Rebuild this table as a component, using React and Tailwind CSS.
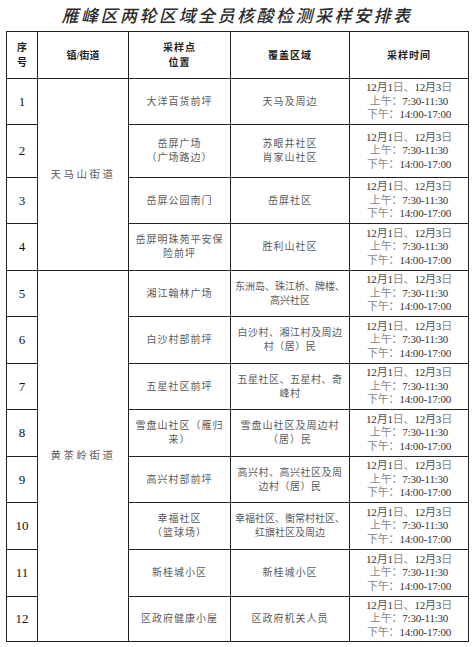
import React from 'react';

const cjk = { fontFamily: '"Liberation Serif", "Noto Sans CJK SC", serif' };

const rows = [
  { no: 1, h: 'h-[46px]', site: ['大洋百货前坪'], area: ['天马及周边'] },
  { no: 2, h: 'h-[53px]', site: ['岳屏广场', '（广场路边）'], area: ['苏眼井社区', '肖家山社区'] },
  { no: 3, h: 'h-[46px]', site: ['岳屏公园南门'], area: ['岳屏社区'] },
  { no: 4, h: 'h-[47px]', site: ['岳屏明珠苑平安保', '险前坪'], area: ['胜利山社区'] },
  { no: 5, h: 'h-[46px]', site: ['湘江翰林广场'], area: ['东洲岛、珠江桥、牌楼、', '高兴社区'] },
  { no: 6, h: 'h-[47px]', site: ['白沙村部前坪'], area: ['白沙村、湘江村及周边', '村（居）民'] },
  { no: 7, h: 'h-[46px]', site: ['五星社区前坪'], area: ['五星社区、五星村、奇', '峰村'] },
  { no: 8, h: 'h-[47px]', site: ['雪盘山社区（雁归', '来）'], area: ['雪盘山社区及周边村', '（居）民'] },
  { no: 9, h: 'h-[46px]', site: ['高兴村部前坪'], area: ['高兴村、高兴社区及周', '边村（居）民'] },
  { no: 10, h: 'h-[47px]', site: ['幸福社区', '（篮球场）'], area: ['幸福社区、衡常村社区、', '红旗社区及周边'] },
  { no: 11, h: 'h-[47px]', site: ['新桂城小区'], area: ['新桂城小区'] },
  { no: 12, h: 'h-[45px]', site: ['区政府健康小屋'], area: ['区政府机关人员'] },
];

const Lines = ({ items }) => {
  const longest = Math.max(...items.map((t) => t.length));
  const track = longest >= 11 ? 'tracking-[0px]' : longest >= 10 ? 'tracking-[0.5px]' : 'tracking-[1px]';
  return (
    <div className={`text-[10px] leading-[14px] text-[#5a5a5a] whitespace-nowrap ${track}`}>
      {items.map((t) => (
        <div key={t}>{t}</div>
      ))}
    </div>
  );
};

const Time = () => (
  <div className="text-[11px] leading-[13.5px] text-[#333] tracking-[-0.2px]">
    <div>12<span className="text-[#555]">月</span>1<span className="text-[#888]">日、</span>12<span className="text-[#555]">月</span>3<span className="text-[#888]">日</span></div>
    <div><span className="text-[#888]">上午：</span>7:30-11:30</div>
    <div><span className="text-[#888]">下午：</span>14:00-17:00</div>
  </div>
);

export default function App() {
  const cell = 'border border-[#222] text-center align-middle p-0';
  return (
    <div className="w-[474px] h-[647px] bg-white" style={cjk}>
      <div className="h-[31px] pt-[4px] text-center text-[17px] leading-[22px] italic font-medium tracking-[2.5px] text-[#2a2a2a]" style={{ fontFamily: '"Noto Sans CJK SC", sans-serif' }}>
        雁峰区两轮区域全员核酸检测采样安排表
      </div>
      <table className="ml-[6px] w-[462px] border-collapse table-fixed">
        <colgroup>
          <col className="w-[31px]" />
          <col className="w-[91px]" />
          <col className="w-[102px]" />
          <col className="w-[119px]" />
          <col className="w-[119px]" />
        </colgroup>
        <thead>
          <tr className="h-[47px] text-[10px] font-bold text-[#222]">
            <th className={cell}>
              <div className="leading-[15px]">序<br />号</div>
            </th>
            <th className={cell}>镇/街道</th>
            <th className={cell}>
              <div className="leading-[15px] tracking-[1px]">采样点<br />位置</div>
            </th>
            <th className={`${cell} tracking-[1px]`}>覆盖区域</th>
            <th className={`${cell} tracking-[1px]`}>采样时间</th>
          </tr>
        </thead>
        <tbody>
          {rows.map((r) => (
            <tr key={r.no} className={r.h}>
              <td className={`${cell} text-[13px] text-[#111]`}>{r.no}</td>
              {r.no === 1 && (
                <td rowSpan={4} className={cell}>
                  <div className="text-[10.5px] tracking-[2.5px] text-[#5a5a5a]">天马山街道</div>
                </td>
              )}
              {r.no === 5 && (
                <td rowSpan={8} className={cell}>
                  <div className="text-[10.5px] tracking-[2.5px] text-[#5a5a5a]">黄茶岭街道</div>
                </td>
              )}
              <td className={cell}>
                <Lines items={r.site} />
              </td>
              <td className={cell}>
                <Lines items={r.area} />
              </td>
              <td className={cell}>
                <Time />
              </td>
            </tr>
          ))}
        </tbody>
      </table>
    </div>
  );
}
